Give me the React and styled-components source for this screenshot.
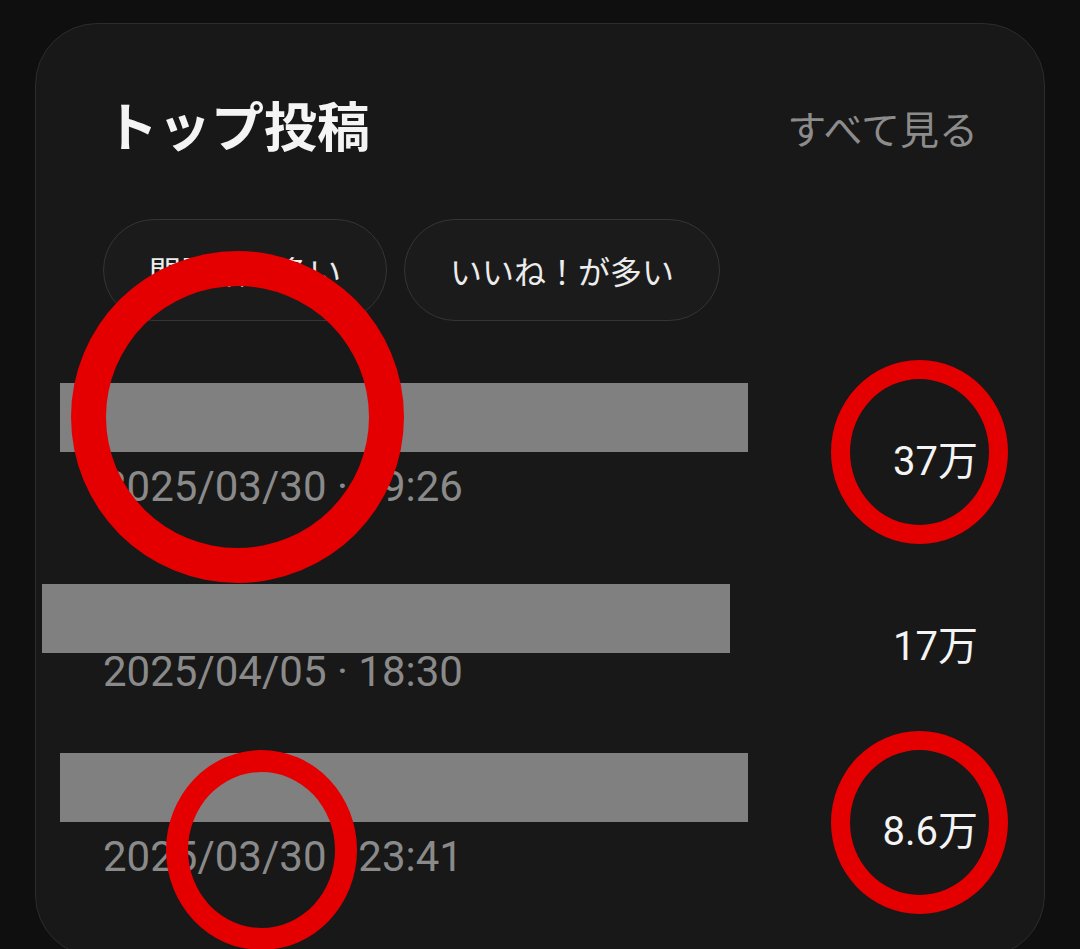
import React from 'react';
import styled, { createGlobalStyle } from 'styled-components';

const GlobalStyle = createGlobalStyle`
  html, body {
    margin: 0;
    padding: 0;
    overflow: hidden;
    background: #0f0f0f;
  }
`;

const Page = styled.div`
  padding: 23px 35px 0;
  font-family: Roboto, "Noto Sans CJK JP", sans-serif;
`;

const Card = styled.section`
  position: relative;
  box-sizing: border-box;
  width: 1010px;
  height: 934px;
  padding: 64px 66px 0 67px;

  background-color: #181818;
  border: 1px solid #2c2c2c;
  border-radius: 62px;
`;

const Header = styled.div`
  height: 72px;
  display: flex;
  justify-content: space-between;
  align-items: center;
`;

const Title = styled.h2`
  margin: 0 0 0 2px;
  font-family: "Noto Sans CJK JP", sans-serif;
  font-size: 53px;
  font-weight: 700;
  line-height: 1;
  color: #f4f4f4;
`;

const SeeAll = styled.a`
  margin-top: 6px;
  font-family: "Noto Sans CJK JP", sans-serif;
  font-size: 39px;
  color: #8c8c8c;
  line-height: 1;
  cursor: pointer;
`;

const ChipRow = styled.div`
  margin-top: 59px;
  display: flex;
  gap: 17px;
`;

const Chip = styled.button`
  height: 102px;
  padding: 0 45px;

  display: flex;
  align-items: center;

  background-color: #1b1b1b;
  border: 1.5px solid #353535;
  border-radius: 51px;

  font-family: "Noto Sans CJK JP", sans-serif;
  font-size: 32px;
  color: #ececec;
  cursor: pointer;
`;

const PostList = styled.div`
  margin-top: 62px;
  display: flex;
  flex-direction: column;
  gap: 56px;
`;

const PostRow = styled.div`
  display: grid;
  grid-template-columns: 1fr auto;
  align-items: center;
`;

const PostInfo = styled.div`
  display: flex;
  flex-direction: column;
`;

// hidden post title, covered by a grey block
const Redaction = styled.div`
  width: 688px;
  height: 69px;
  background-color: #808080;
  transform: translate(${(props) => props.$dx}px, ${(props) => props.$dy}px);
`;

const PostDate = styled.div`
  margin-top: 10px;
  font-size: 42px;
  line-height: 50px;
  color: #8a8a8a;
`;

const Count = styled.div`
  margin-top: 20px;
  font-size: 40px;
  color: #f4f4f4;
`;

const Mark = styled.div`
  position: absolute;
  box-sizing: border-box;
  border: ${(props) => props.$stroke}px solid #e40000;
  border-radius: 50%;
  pointer-events: none;
`;

const posts = [
  { date: '2025/03/30 · 19:26', count: '37万', dx: -43, dy: 0 },
  { date: '2025/04/05 · 18:30', count: '17万', dx: -61, dy: 16 },
  { date: '2025/03/30 · 23:41', count: '8.6万', dx: -43, dy: 0 },
];

// red rings drawn over the card (coordinates inside the card)
const marks = [
  { left: 35, top: 227, width: 333, height: 332, stroke: 35 },
  { left: 795, top: 336, width: 177, height: 184, stroke: 19 },
  { left: 130, top: 726, width: 191, height: 200, stroke: 22 },
  { left: 795, top: 707, width: 177, height: 183, stroke: 19 },
];

function App() {
  return (
    <Page>
      <GlobalStyle />
      <Card>
        <Header>
          <Title>トップ投稿</Title>
          <SeeAll>すべて見る</SeeAll>
        </Header>
        <ChipRow>
          <Chip>閲覧数が多い</Chip>
          <Chip>いいね！が多い</Chip>
        </ChipRow>
        <PostList>
          {posts.map((post) => (
            <PostRow key={post.date + post.count}>
              <PostInfo>
                <Redaction $dx={post.dx} $dy={post.dy} />
                <PostDate>{post.date}</PostDate>
              </PostInfo>
              <Count>{post.count}</Count>
            </PostRow>
          ))}
        </PostList>
        {marks.map((m) => (
          <Mark
            key={`${m.left}-${m.top}`}
            $stroke={m.stroke}
            style={{ left: m.left, top: m.top, width: m.width, height: m.height }}
          />
        ))}
      </Card>
    </Page>
  );
}

export default App;
